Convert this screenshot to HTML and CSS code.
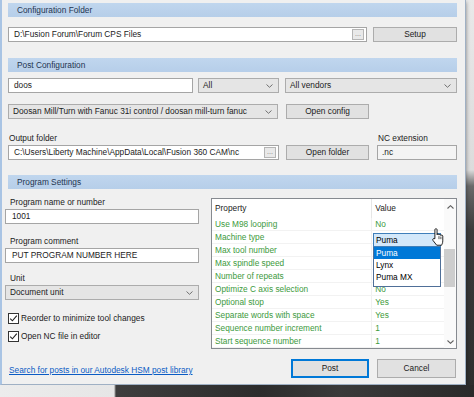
FILE: index.html
```html
<!DOCTYPE html>
<html lang="en">

<head>
    <meta charset="UTF-8">
    <title>Post Process</title>
    <link rel="stylesheet" href="styles.css">
</head>

<body>

    <div class="dialog">

        <!-- Configuration folder -->
        <div class="band">Configuration Folder</div>
        <div class="row row-config">
            <div class="field config-path">D:\Fusion Forum\Forum CPS Files<span class="dots">...</span></div>
            <div class="btn setup">Setup</div>
        </div>

        <!-- Post configuration -->
        <div class="band band-post">Post Configuration</div>
        <div class="row row-search">
            <div class="field search">doos</div>
            <div class="select sel-all">All<svg class="chev" width="7" height="4" viewBox="0 0 7 4"><path d="M.5 .5 3.5 3.3 6.5 .5" /></svg></div>
            <div class="select sel-vendor">All vendors<svg class="chev" width="7" height="4" viewBox="0 0 7 4"><path d="M.5 .5 3.5 3.3 6.5 .5" /></svg></div>
        </div>
        <div class="row row-post">
            <div class="select sel-post">Doosan Mill/Turn with Fanuc 31i control / doosan mill-turn fanuc<svg class="chev" width="7" height="4" viewBox="0 0 7 4"><path d="M.5 .5 3.5 3.3 6.5 .5" /></svg></div>
            <div class="btn open-config">Open config</div>
        </div>
        <div class="labels">
            <span class="lbl-output">Output folder</span>
            <span class="lbl-ext">NC extension</span>
        </div>
        <div class="row row-output">
            <div class="field output-path">C:\Users\Liberty Machine\AppData\Local\Fusion 360 CAM\nc<span class="dots">...</span></div>
            <div class="btn open-folder">Open folder</div>
            <div class="field ext">.nc</div>
        </div>

        <!-- Program settings -->
        <div class="band band-program">Program Settings</div>
        <div class="settings">
            <div class="left">
                <div class="lbl">Program name or number</div>
                <div class="field wide">1001</div>
                <div class="lbl lbl-comment">Program comment</div>
                <div class="field wide">PUT PROGRAM NUMBER HERE</div>
                <div class="lbl lbl-unit">Unit</div>
                <div class="select wide">Document unit<svg class="chev" width="7" height="4" viewBox="0 0 7 4"><path d="M.5 .5 3.5 3.3 6.5 .5" /></svg></div>
                <label class="check check-first">
                    <svg width="11" height="11" viewBox="0 0 11 11"><rect x=".5" y=".5" width="10" height="10" fill="#fff" stroke="#333" /><path d="M2.2 5.6 4.4 7.8 8.8 2.6" fill="none" stroke="#222" stroke-width="1.1" /></svg>
                    Reorder to minimize tool changes
                </label>
                <label class="check">
                    <svg width="11" height="11" viewBox="0 0 11 11"><rect x=".5" y=".5" width="10" height="10" fill="#fff" stroke="#333" /><path d="M2.2 5.6 4.4 7.8 8.8 2.6" fill="none" stroke="#222" stroke-width="1.1" /></svg>
                    Open NC file in editor
                </label>
            </div>

            <div class="props">
                <div class="grid">
                    <div class="prow head"><span class="pname">Property</span><span class="pval">Value</span></div>
                    <div class="prow"><span class="pname">Use M98 looping</span><span class="pval">No</span></div>
                    <!-- values of the next rows sit under the open combo -->
                    <div class="prow"><span class="pname">Machine type</span><span class="pval"></span></div>
                    <div class="prow"><span class="pname">Max tool number</span><span class="pval"></span></div>
                    <div class="prow"><span class="pname">Max spindle speed</span><span class="pval"></span></div>
                    <div class="prow"><span class="pname">Number of repeats</span><span class="pval"></span></div>
                    <div class="prow"><span class="pname">Optimize C axis selection</span><span class="pval">No</span></div>
                    <div class="prow"><span class="pname">Optional stop</span><span class="pval">Yes</span></div>
                    <div class="prow"><span class="pname">Separate words with space</span><span class="pval">Yes</span></div>
                    <div class="prow"><span class="pname">Sequence number increment</span><span class="pval">1</span></div>
                    <div class="prow"><span class="pname">Start sequence number</span><span class="pval">1</span></div>
                </div>
                <div class="vscroll">
                    <svg class="arrow" width="7" height="4" viewBox="0 0 7 4"><path d="M.5 3.5 3.5 .7 6.5 3.5" /></svg>
                    <div class="thumb"></div>
                    <svg class="arrow arrow-down" width="7" height="4" viewBox="0 0 7 4"><path d="M.5 .5 3.5 3.3 6.5 .5" /></svg>
                </div>

                <!-- open combo for Machine type -->
                <div class="combo">Puma</div>
                <div class="combo-list">
                    <div class="opt active">Puma</div>
                    <div class="opt">Lynx</div>
                    <div class="opt">Puma MX</div>
                </div>
                <svg class="cursor" width="13" height="20" viewBox="0 0 15 21">
                    <path d="M4.5 12.5V2C4.5 .6 7 .6 7 2V8C7 6.9 9.2 6.9 9.2 8.3C9.2 7.3 11.4 7.3 11.4 8.8C11.4 8 13.6 8 13.6 9.5V15C13.6 17.3 12.7 18.8 12.2 20H6.6L2.3 14.5C1.3 13.2 2.8 11.6 4.5 12.5Z" fill="#fff" stroke="#000" stroke-width="1" stroke-linejoin="round" />
                    <path d="M9.2 9.5V13M11.4 10V13" stroke="#000" stroke-width=".8" />
                </svg>
            </div>
        </div>

        <!-- Footer -->
        <div class="footer">
            <a class="link" href="#">Search for posts in our Autodesk HSM post library</a>
            <div class="btn post">Post</div>
            <div class="btn cancel">Cancel</div>
        </div>
    </div>

    <div class="desk"></div>

</body>

</html>
```

FILE: styles.css
```css
body {
    margin: 0;
    width: 474px;
    height: 397px;
    overflow: hidden;
    font-family: "Liberation Sans", Arial, sans-serif;
    font-size: 8.3px;
    color: #1b1b1b;
    background: linear-gradient(to bottom, #e9e9e9 0, #dcdcdc 170px, #6a6a6a 186px, #3b3b3b 230px, #2d2d2d 100%);
}

.dialog {
    box-sizing: border-box;
    width: 466px;
    height: 385px;
    padding: 3px 8px 0 6px;
    background: #f0f0f0;
    border-left: 2px solid #a9c4e4;
    border-right: 1px solid #9fb0c4;
    border-bottom: 1px solid #9fb0c4;
    box-shadow: 0 2px 4px rgba(0, 0, 0, 0.45);
}

.desk {
    height: 12px;
    background: linear-gradient(to right, #ececec 0, #e6e6e6 114px, #3e3e3e 116px, #2c2c2c 260px, #3a3a3a 340px, #2a2a2a 100%);
}

.band {
    height: 14px;
    line-height: 14px;
    padding-left: 9px;
    background: linear-gradient(to bottom, #c0d6ee, #b6cee9);
    color: #1f3550;
}

.band-post {
    margin-top: 16px;
}

.band-program {
    margin-top: 15px;
}

.row {
    display: flex;
    align-items: center;
    height: 15px;
}

.row-config {
    margin-top: 10px;
}

.row-search {
    margin-top: 6px;
}

.row-post {
    margin-top: 11px;
}

.row-output {
    margin-top: 1px;
}

.field,
.select,
.btn {
    box-sizing: border-box;
    height: 15px;
    line-height: 13px;
    border: 1px solid #acacac;
    white-space: nowrap;
}

.field {
    position: relative;
    background: #fff;
    padding: 0 5px;
    border-color: #a5a5a5;
}

.select {
    display: flex;
    align-items: center;
    justify-content: space-between;
    background: #e5e5e5;
    padding: 0 5px 0 4px;
}

.select .chev {
    flex: none;
    fill: none;
    stroke: #707070;
    stroke-width: 1;
}

.btn {
    background: #e1e1e1;
    text-align: center;
}

.dots {
    position: absolute;
    top: 1px;
    right: 2px;
    box-sizing: border-box;
    width: 12px;
    height: 11px;
    line-height: 8px;
    text-align: center;
    background: #e9e9e9;
    border: 1px solid #b5b5b5;
    color: #777;
    font-size: 7px;
}

.config-path {
    width: 359px;
}

.setup {
    width: 84px;
    margin-left: 6px;
}

.search {
    width: 185px;
}

.sel-all {
    width: 81px;
    margin-left: 5px;
}

.sel-vendor {
    width: 172px;
    margin-left: 6px;
}

.sel-post {
    width: 270px;
}

.open-config {
    width: 83px;
    margin-left: 8px;
}

.labels {
    display: flex;
    height: 12px;
    line-height: 12px;
    margin-top: 13px;
}

.lbl-output {
    width: 369px;
    padding-left: 1px;
}

.output-path {
    width: 271px;
}

.open-folder {
    width: 83px;
    margin-left: 7px;
}

.ext {
    width: 80px;
    margin-left: 8px;
    background: #f4f4f4;
    padding-left: 4px;
}

/* Program settings */
.settings {
    display: flex;
    margin-top: 7px;
}

.left {
    width: 194px;
    margin-left: -3px;
}

.lbl {
    height: 12px;
    line-height: 12px;
    padding-left: 5px;
    margin-bottom: 1px;
}

.lbl-comment {
    margin-top: 11px;
}

.lbl-unit {
    margin-top: 9px;
}

.wide {
    width: 194px;
}

.field.wide {
    padding-left: 6px;
}

.check {
    display: flex;
    align-items: center;
    gap: 2px;
    height: 12px;
    margin: 6px 0 0 3px;
}

.check-first {
    margin-top: 12px;
}

.props {
    position: relative;
    box-sizing: border-box;
    display: flex;
    width: 246px;
    height: 151px;
    margin: 2px 0 0 12px;
    background: #fff;
    border: 1px solid #868a90;
}

.grid {
    width: 232px;
}

.prow {
    display: flex;
    box-sizing: border-box;
    height: 13px;
    line-height: 12px;
    border-bottom: 1px solid #f2f2f2;
    color: #3d9a3d;
}

.prow.head {
    height: 19px;
    line-height: 19px;
    color: #1b1b1b;
    border-bottom: none;
}

.pname {
    width: 157px;
    padding-left: 3px;
}

.pval {
    width: 69px;
    padding-left: 3px;
    border-left: 1px solid #f0f0f0;
}

.head .pval {
    border-left-color: #e6e6e6;
}

.vscroll {
    position: relative;
    width: 12px;
    background: #fafafa;
}

.vscroll .arrow {
    display: block;
    margin: 6px auto 0;
    fill: none;
    stroke: #606060;
    stroke-width: 1.1;
}

.vscroll .arrow-down {
    position: absolute;
    bottom: 4px;
    left: 3px;
    margin: 0;
}

.thumb {
    position: absolute;
    top: 50px;
    left: 0;
    width: 11px;
    height: 38px;
    background: #cdcdcd;
}

.combo {
    position: absolute;
    left: 161px;
    top: 34px;
    box-sizing: border-box;
    width: 68px;
    height: 14px;
    line-height: 12px;
    padding-left: 2px;
    background: #d3e8fa;
    border: 1px solid #3f7fba;
    color: #000;
}

.combo-list {
    position: absolute;
    left: 161px;
    top: 48px;
    box-sizing: border-box;
    width: 68px;
    height: 40px;
    background: #fff;
    border: 1px solid #4f6f98;
    border-top: none;
    color: #000;
}

.opt {
    height: 12px;
    line-height: 12px;
    padding-left: 2px;
}

.opt.active {
    background: #0078d7;
    color: #fff;
}

.cursor {
    position: absolute;
    left: 219px;
    top: 28px;
}

/* Footer */
.footer {
    display: flex;
    align-items: flex-end;
    height: 19px;
    margin-top: 10px;
}

.link {
    margin: 0 0 2px 1px;
    line-height: 12px;
    color: #0a5bc4;
}

.btn.post,
.btn.cancel {
    height: 19px;
    line-height: 17px;
}

.post {
    width: 78px;
    margin-left: auto;
    border-color: #0078d7;
    box-shadow: inset 0 0 0 1px #0078d7;
}

.cancel {
    width: 79px;
    margin: 0 1px 0 8px;
}
```
